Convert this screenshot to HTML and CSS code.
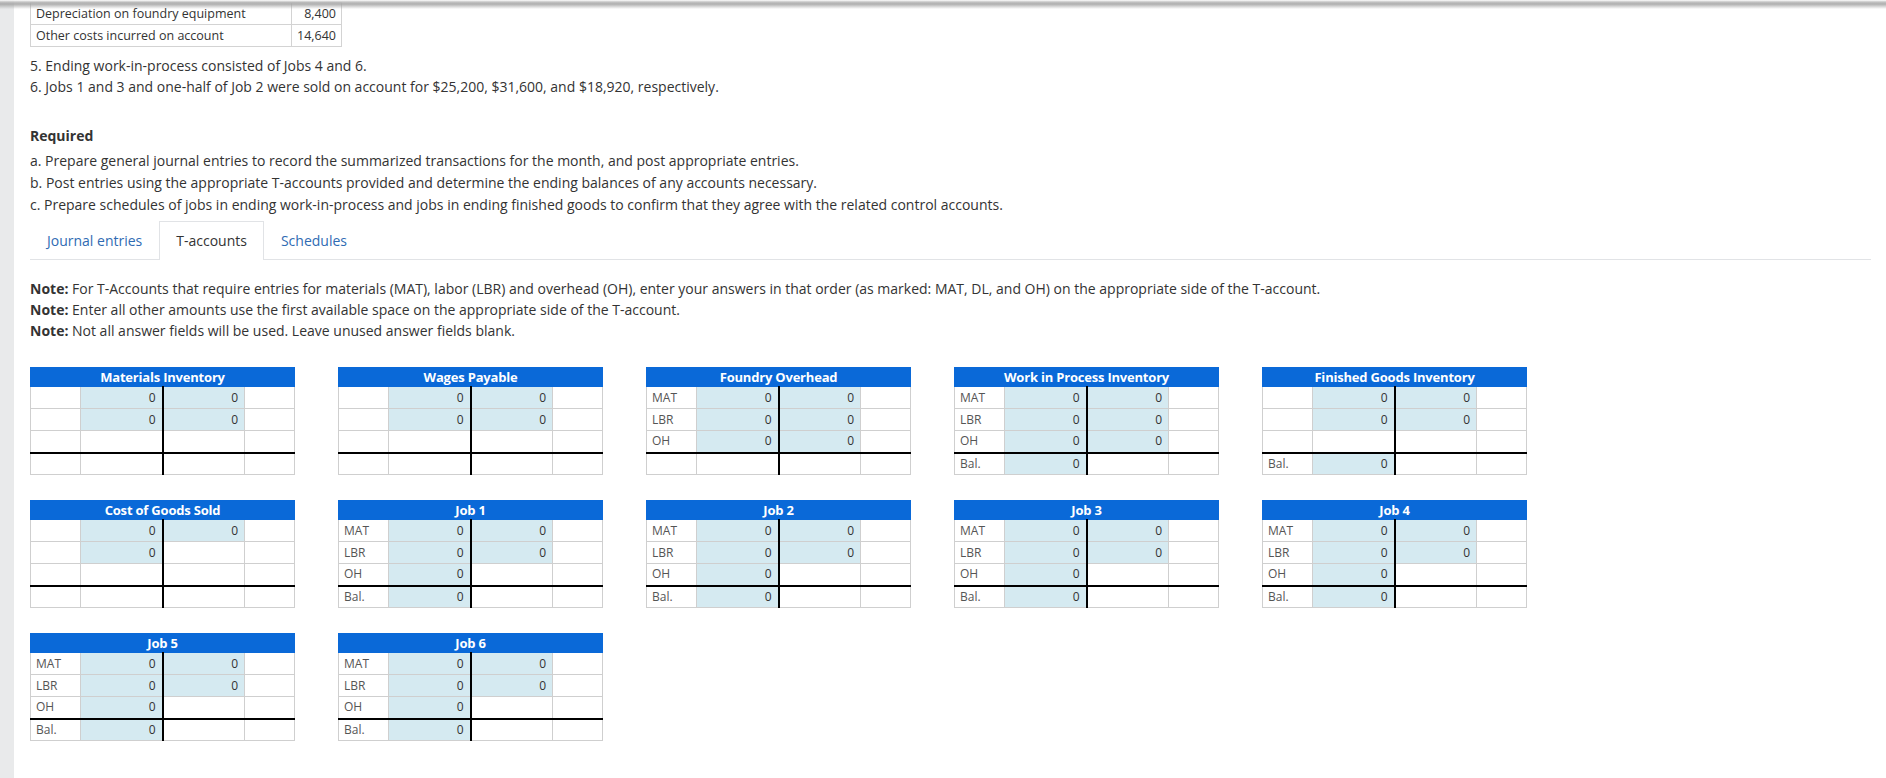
FILE: index.html
```html
<!DOCTYPE html>
<html lang="en">
<head>
<meta charset="utf-8">
<title>Job-order costing — T-accounts</title>
<link rel="stylesheet" href="styles.css">
</head>
<body>
<div class="topshade"></div>
<div class="page">
  <main class="content">
    <table class="costs">
      <tr><td>Depreciation on foundry equipment</td><td class="num">8,400</td></tr>
      <tr><td>Other costs incurred on account</td><td class="num">14,640</td></tr>
    </table>

    <p class="line first">5. Ending work-in-process consisted of Jobs 4 and 6.</p>
    <p class="line">6. Jobs 1 and 3 and one-half of Job 2 were sold on account for $25,200, $31,600, and $18,920, respectively.</p>

    <h4 class="req-title">Required</h4>
    <p class="line req">a. Prepare general journal entries to record the summarized transactions for the month, and post appropriate entries.</p>
    <p class="line req">b. Post entries using the appropriate T-accounts provided and determine the ending balances of any accounts necessary.</p>
    <p class="line req">c. Prepare schedules of jobs in ending work-in-process and jobs in ending finished goods to confirm that they agree with the related control accounts.</p>

    <ul class="tabs">
      <li class="tab">Journal entries</li>
      <li class="tab active">T-accounts</li>
      <li class="tab">Schedules</li>
    </ul>

    <div class="notes">
      <p class="line"><b>Note:</b> For T-Accounts that require entries for materials (MAT), labor (LBR) and overhead (OH), enter your answers in that order (as marked: MAT, DL, and OH) on the appropriate side of the T-account.</p>
      <p class="line"><b>Note:</b> Enter all other amounts use the first available space on the appropriate side of the T-account.</p>
      <p class="line"><b>Note:</b> Not all answer fields will be used. Leave unused answer fields blank.</p>
    </div>

    <div class="ledger">
      <!-- Materials Inventory -->
      <table class="tacct">
        <colgroup><col class="c-lab"><col class="c-amt"><col class="c-amt"><col class="c-end"></colgroup>
        <thead><tr><th colspan="4">Materials Inventory</th></tr></thead>
        <tbody>
          <tr><td class="lab"></td><td class="dr fill">0</td><td class="fill">0</td><td></td></tr>
          <tr><td class="lab"></td><td class="dr fill">0</td><td class="fill">0</td><td></td></tr>
          <tr><td class="lab"></td><td class="dr"></td><td></td><td></td></tr>
          <tr class="bal"><td class="lab"></td><td class="dr"></td><td></td><td></td></tr>
        </tbody>
      </table>

      <!-- Wages Payable -->
      <table class="tacct">
        <colgroup><col class="c-lab"><col class="c-amt"><col class="c-amt"><col class="c-end"></colgroup>
        <thead><tr><th colspan="4">Wages Payable</th></tr></thead>
        <tbody>
          <tr><td class="lab"></td><td class="dr fill">0</td><td class="fill">0</td><td></td></tr>
          <tr><td class="lab"></td><td class="dr fill">0</td><td class="fill">0</td><td></td></tr>
          <tr><td class="lab"></td><td class="dr"></td><td></td><td></td></tr>
          <tr class="bal"><td class="lab"></td><td class="dr"></td><td></td><td></td></tr>
        </tbody>
      </table>

      <!-- Foundry Overhead -->
      <table class="tacct">
        <colgroup><col class="c-lab"><col class="c-amt"><col class="c-amt"><col class="c-end"></colgroup>
        <thead><tr><th colspan="4">Foundry Overhead</th></tr></thead>
        <tbody>
          <tr><td class="lab">MAT</td><td class="dr fill">0</td><td class="fill">0</td><td></td></tr>
          <tr><td class="lab">LBR</td><td class="dr fill">0</td><td class="fill">0</td><td></td></tr>
          <tr><td class="lab">OH</td><td class="dr fill">0</td><td class="fill">0</td><td></td></tr>
          <tr class="bal"><td class="lab"></td><td class="dr"></td><td></td><td></td></tr>
        </tbody>
      </table>

      <!-- Work in Process Inventory -->
      <table class="tacct">
        <colgroup><col class="c-lab"><col class="c-amt"><col class="c-amt"><col class="c-end"></colgroup>
        <thead><tr><th colspan="4">Work in Process Inventory</th></tr></thead>
        <tbody>
          <tr><td class="lab">MAT</td><td class="dr fill">0</td><td class="fill">0</td><td></td></tr>
          <tr><td class="lab">LBR</td><td class="dr fill">0</td><td class="fill">0</td><td></td></tr>
          <tr><td class="lab">OH</td><td class="dr fill">0</td><td class="fill">0</td><td></td></tr>
          <tr class="bal"><td class="lab">Bal.</td><td class="dr fill">0</td><td></td><td></td></tr>
        </tbody>
      </table>

      <!-- Finished Goods Inventory -->
      <table class="tacct">
        <colgroup><col class="c-lab"><col class="c-amt"><col class="c-amt"><col class="c-end"></colgroup>
        <thead><tr><th colspan="4">Finished Goods Inventory</th></tr></thead>
        <tbody>
          <tr><td class="lab"></td><td class="dr fill">0</td><td class="fill">0</td><td></td></tr>
          <tr><td class="lab"></td><td class="dr fill">0</td><td class="fill">0</td><td></td></tr>
          <tr><td class="lab"></td><td class="dr"></td><td></td><td></td></tr>
          <tr class="bal"><td class="lab">Bal.</td><td class="dr fill">0</td><td></td><td></td></tr>
        </tbody>
      </table>

      <!-- Cost of Goods Sold -->
      <table class="tacct">
        <colgroup><col class="c-lab"><col class="c-amt"><col class="c-amt"><col class="c-end"></colgroup>
        <thead><tr><th colspan="4">Cost of Goods Sold</th></tr></thead>
        <tbody>
          <tr><td class="lab"></td><td class="dr fill">0</td><td class="fill">0</td><td></td></tr>
          <tr><td class="lab"></td><td class="dr fill">0</td><td></td><td></td></tr>
          <tr><td class="lab"></td><td class="dr"></td><td></td><td></td></tr>
          <tr class="bal"><td class="lab"></td><td class="dr"></td><td></td><td></td></tr>
        </tbody>
      </table>

      <!-- Job 1 -->
      <table class="tacct">
        <colgroup><col class="c-lab"><col class="c-amt"><col class="c-amt"><col class="c-end"></colgroup>
        <thead><tr><th colspan="4">Job 1</th></tr></thead>
        <tbody>
          <tr><td class="lab">MAT</td><td class="dr fill">0</td><td class="fill">0</td><td></td></tr>
          <tr><td class="lab">LBR</td><td class="dr fill">0</td><td class="fill">0</td><td></td></tr>
          <tr><td class="lab">OH</td><td class="dr fill">0</td><td></td><td></td></tr>
          <tr class="bal"><td class="lab">Bal.</td><td class="dr fill">0</td><td></td><td></td></tr>
        </tbody>
      </table>

      <!-- Job 2 -->
      <table class="tacct">
        <colgroup><col class="c-lab"><col class="c-amt"><col class="c-amt"><col class="c-end"></colgroup>
        <thead><tr><th colspan="4">Job 2</th></tr></thead>
        <tbody>
          <tr><td class="lab">MAT</td><td class="dr fill">0</td><td class="fill">0</td><td></td></tr>
          <tr><td class="lab">LBR</td><td class="dr fill">0</td><td class="fill">0</td><td></td></tr>
          <tr><td class="lab">OH</td><td class="dr fill">0</td><td></td><td></td></tr>
          <tr class="bal"><td class="lab">Bal.</td><td class="dr fill">0</td><td></td><td></td></tr>
        </tbody>
      </table>

      <!-- Job 3 -->
      <table class="tacct">
        <colgroup><col class="c-lab"><col class="c-amt"><col class="c-amt"><col class="c-end"></colgroup>
        <thead><tr><th colspan="4">Job 3</th></tr></thead>
        <tbody>
          <tr><td class="lab">MAT</td><td class="dr fill">0</td><td class="fill">0</td><td></td></tr>
          <tr><td class="lab">LBR</td><td class="dr fill">0</td><td class="fill">0</td><td></td></tr>
          <tr><td class="lab">OH</td><td class="dr fill">0</td><td></td><td></td></tr>
          <tr class="bal"><td class="lab">Bal.</td><td class="dr fill">0</td><td></td><td></td></tr>
        </tbody>
      </table>

      <!-- Job 4 -->
      <table class="tacct">
        <colgroup><col class="c-lab"><col class="c-amt"><col class="c-amt"><col class="c-end"></colgroup>
        <thead><tr><th colspan="4">Job 4</th></tr></thead>
        <tbody>
          <tr><td class="lab">MAT</td><td class="dr fill">0</td><td class="fill">0</td><td></td></tr>
          <tr><td class="lab">LBR</td><td class="dr fill">0</td><td class="fill">0</td><td></td></tr>
          <tr><td class="lab">OH</td><td class="dr fill">0</td><td></td><td></td></tr>
          <tr class="bal"><td class="lab">Bal.</td><td class="dr fill">0</td><td></td><td></td></tr>
        </tbody>
      </table>

      <!-- Job 5 -->
      <table class="tacct">
        <colgroup><col class="c-lab"><col class="c-amt"><col class="c-amt"><col class="c-end"></colgroup>
        <thead><tr><th colspan="4">Job 5</th></tr></thead>
        <tbody>
          <tr><td class="lab">MAT</td><td class="dr fill">0</td><td class="fill">0</td><td></td></tr>
          <tr><td class="lab">LBR</td><td class="dr fill">0</td><td class="fill">0</td><td></td></tr>
          <tr><td class="lab">OH</td><td class="dr fill">0</td><td></td><td></td></tr>
          <tr class="bal"><td class="lab">Bal.</td><td class="dr fill">0</td><td></td><td></td></tr>
        </tbody>
      </table>

      <!-- Job 6 -->
      <table class="tacct">
        <colgroup><col class="c-lab"><col class="c-amt"><col class="c-amt"><col class="c-end"></colgroup>
        <thead><tr><th colspan="4">Job 6</th></tr></thead>
        <tbody>
          <tr><td class="lab">MAT</td><td class="dr fill">0</td><td class="fill">0</td><td></td></tr>
          <tr><td class="lab">LBR</td><td class="dr fill">0</td><td class="fill">0</td><td></td></tr>
          <tr><td class="lab">OH</td><td class="dr fill">0</td><td></td><td></td></tr>
          <tr class="bal"><td class="lab">Bal.</td><td class="dr fill">0</td><td></td><td></td></tr>
        </tbody>
      </table>
    </div>
  </main>
</div>
</body>
</html>
```

FILE: styles.css
```css
* {
  box-sizing: border-box;
}

html, body {
  margin: 0;
  padding: 0;
  background: #fff;
}

body {
  font-family: "Open Sans", "Liberation Sans", sans-serif;
  font-size: 14px;
  color: #333;
  overflow: hidden;
}

.topshade {
  position: fixed;
  top: 0;
  left: 0;
  right: 0;
  height: 10px;
  background: linear-gradient(to bottom, rgba(255,255,255,0.9) 0, rgba(190,190,190,0.9) 2px, rgba(160,160,160,0.85) 4px, rgba(255,255,255,0) 9px);
  z-index: 5;
}

.page {
  min-height: 778px;
  border-left: 14px solid #e9eaeb;
}

.content {
  padding: 2px 15px 40px 16px;
}

/* cost summary table */
.costs {
  border-collapse: collapse;
  font-size: 12.5px;
  color: #333;
}

.costs td {
  border: 1px solid #d3d3d3;
  height: 22px;
  padding: 0 5px;
  line-height: 20px;
  width: 261px;
}

.costs td.num {
  text-align: right;
  width: 48px;
}

.line {
  margin: 0;
  line-height: 21px;
}

.line.first {
  margin-top: 8px;
}

.line.req {
  line-height: 22px;
}

.req-title {
  margin: 28px 0 4px;
  font-size: 14px;
  font-weight: 700;
  line-height: 21px;
}

/* tabs */
.tabs {
  list-style: none;
  margin: 5px 0 0;
  padding: 0;
  display: flex;
  border-bottom: 1px solid #e1e3e6;
}

.tab {
  height: 39px;
  padding: 0 16px;
  line-height: 38px;
  color: #2f6bb3;
  border: 1px solid transparent;
  border-bottom: none;
  margin-bottom: -1px;
}

.tab.active {
  color: #333;
  background: #fff;
  border-color: #e1e3e6;
}

.notes {
  margin-top: 18px;
}

.notes b {
  font-weight: 700;
}

/* T-account grid */
.ledger {
  margin-top: 26px;
  display: grid;
  grid-template-columns: repeat(5, 264px);
  column-gap: 44px;
  row-gap: 25px;
}

.tacct {
  border-collapse: collapse;
  width: 264px;
  table-layout: fixed;
  font-size: 12px;
}

.c-lab, .c-end {
  width: 50px;
}

.c-amt {
  width: 82px;
}

.tacct th {
  height: 19px;
  padding: 0;
  background: #0a69d8;
  color: #fff;
  font-weight: 700;
  font-size: 13px;
  line-height: 18px;
  letter-spacing: -0.2px;
  text-align: center;
  border: 1px solid #0a69d8;
}

.tacct td {
  height: 22px;
  padding: 0 6px 0 5px;
  border: 1px solid #cfcfcf;
  line-height: 20px;
  text-align: right;
  color: #333;
}

.tacct td.lab {
  text-align: left;
  color: #555;
}

.tacct td.fill {
  background: #d5eaf1;
}

.tacct td.dr {
  border-right: 2px solid #000;
}

.tacct tr.bal td {
  border-top: 2px solid #000;
}
```
